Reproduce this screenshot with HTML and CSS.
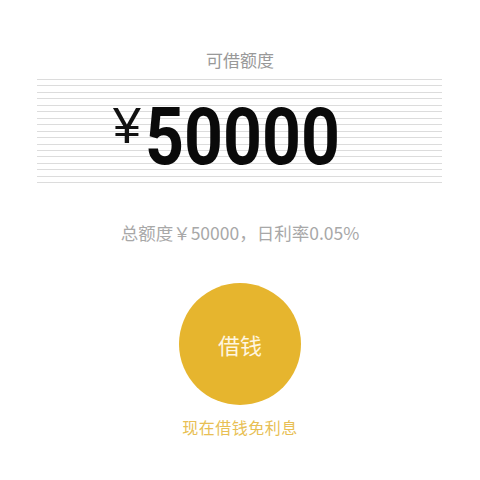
FILE: index.html
```html
<!DOCTYPE html>
<html>
<head>
<meta charset="utf-8">
<link rel="stylesheet" href="styles.css">
</head>
<body>
<div class="page">
  <div class="title">可借额度</div>
  <div class="lined">
    <div class="amount"><span class="yen">¥</span><span class="num">50000</span></div>
  </div>
  <div class="sub">总额度￥50000，日利率0.05%</div>
  <div class="btn">借钱</div>
  <div class="note">现在借钱免利息</div>
</div>
</body>
</html>
```
FILE: styles.css
```css
html, body {
  margin: 0;
  padding: 0;
  background: #fff;
}
.page {
  width: 480px;
  height: 480px;
  display: flex;
  flex-direction: column;
  align-items: center;
  font-family: "Noto Sans CJK SC", "Noto Sans", sans-serif;
}
.title {
  margin-top: 48px;
  height: 24px;
  line-height: 24px;
  font-size: 17px;
  color: #999;
}
.lined {
  margin-top: 7px;
  width: 405px;
  margin-left: -1px;
  height: 110px;
  background: repeating-linear-gradient(to bottom, #dcdcdc 0, #dcdcdc 1px, transparent 1px, transparent 6.45px);
  display: flex;
  justify-content: flex-start;
  align-items: flex-start;
}
.amount {
  display: flex;
  align-items: flex-start;
  padding-left: 76px;
  margin-top: 18px;
}
.yen {
  font-family: "Liberation Sans", sans-serif;
  font-size: 50px;
  line-height: 50px;
  color: #111;
  margin-top: 4px;
  margin-right: 4px;
}
.num {
  display: inline-block;
  font-family: Roboto, sans-serif;
  font-weight: 700;
  font-size: 80px;
  line-height: 80px;
  color: #0a0a0a;
  transform: scaleX(0.85);
  transform-origin: left top;
}
.sub {
  margin-top: 32px;
  font-size: 17.5px;
  line-height: 24px;
  color: #a8a8a8;
}
.btn {
  margin-top: 38px;
  width: 122px;
  height: 122px;
  border-radius: 50%;
  background: #e6b52e;
  color: #fff6e0;
  font-size: 22px;
  display: flex;
  align-items: center;
  justify-content: center;
}
.note {
  margin-top: 10px;
  font-size: 16px;
  line-height: 24px;
  color: #e8bf55;
  letter-spacing: 0.5px;
}
```
